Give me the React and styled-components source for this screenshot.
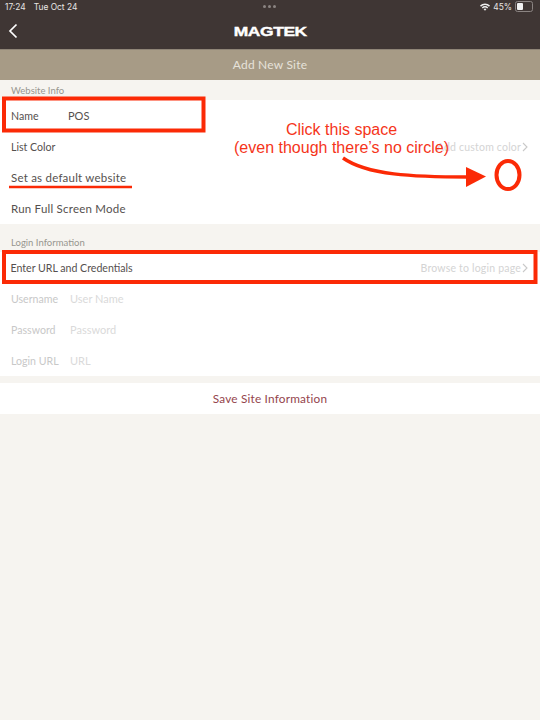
import styled, { createGlobalStyle } from "styled-components";

const GlobalStyle = createGlobalStyle`
  html, body {
    margin: 0;
    padding: 0;
    background: #f6f4f0;
  }
`;

const Screen = styled.div`
  position: relative;
  width: 540px;
  height: 720px;
  overflow: hidden;
  background: #f6f4f0;
  font-family: Lato, "Open Sans", sans-serif;
`;

const TopBar = styled.div`
  background: #3f3634;
  height: 49px;
  border-bottom: 1px solid #8f8577;
  display: flex;
  flex-direction: column;
`;

const StatusBar = styled.div`
  height: 13px;
  padding: 0 6px 0 5px;
  display: flex;
  align-items: center;
  justify-content: space-between;
  color: #e8e6e4;
  font-family: Inter, "Liberation Sans", sans-serif;
  font-size: 8.4px;
`;

const StatusLeft = styled.div`
  display: flex;
  gap: 8px;
  width: 100px;
`;

const Dots = styled.div`
  display: flex;
  gap: 2px;
`;

const Dot = styled.span`
  width: 3px;
  height: 3px;
  border-radius: 50%;
  background: #8b8482;
`;

const StatusRight = styled.div`
  display: flex;
  align-items: center;
  justify-content: flex-end;
  gap: 3px;
  width: 100px;
`;

const Battery = styled.div`
  width: 14px;
  height: 7px;
  border: 1px solid #8b8482;
  border-radius: 2.5px;
  padding: 1px;
  margin-right: 1px;
  display: flex;
`;

const BatteryLevel = styled.div`
  width: 45%;
  background: #f2f2f2;
  border-radius: 1px;
`;

const NavBar = styled.div`
  flex: 1;
  position: relative;
  display: flex;
  align-items: center;
  justify-content: center;
`;

const BackButton = styled.svg`
  position: absolute;
  left: 8px;
  top: 10px;
`;

const Logo = styled.div`
  color: #fff;
  font-family: "Liberation Sans", sans-serif;
  font-weight: 700;
  font-size: 13px;
  letter-spacing: -0.3px;
  transform: scaleX(1.34);
  -webkit-text-stroke: 0.4px #fff;
`;

const TitleBar = styled.div`
  background: #a79b86;
  height: 30px;
  padding-bottom: 2px;
  box-sizing: border-box;
  display: flex;
  align-items: center;
  justify-content: center;
  color: #e6e2da;
  font-size: 12px;
  letter-spacing: 0.2px;
`;

const SectionLabel = styled.div`
  height: ${(p) => p.$height}px;
  padding: 0 0 ${(p) => p.$bottom}px 11px;
  box-sizing: border-box;
  display: flex;
  align-items: flex-end;
  color: #96968f;
  font-size: 9.5px;
`;

const Group = styled.div`
  background: #fff;
  margin-bottom: ${(p) => p.$gap || 0}px;
`;

const Row = styled.div`
  height: 31px;
  padding: 0 12px 0 ${(p) => p.$inset || 11}px;
  display: flex;
  align-items: center;
  font-size: 10.6px;
  color: ${(p) => (p.$muted ? "#c8c8c8" : "#55504e")};
`;

const RowLabel = styled.span`
  width: ${(p) => p.$width || 59}px;
  flex: none;
`;

const RowValue = styled.span`
  font-size: 11px;
  color: ${(p) => (p.$placeholder ? "#dadada" : "#55504e")};
`;

const Wide = styled.span`
  font-size: 11.5px;
  letter-spacing: 0.22px;
`;

const Accessory = styled.div`
  margin-left: auto;
  display: flex;
  align-items: center;
  gap: 1px;
  color: #d4d4d4;
  font-size: 10.5px;
  letter-spacing: 0.2px;
`;

const SaveButton = styled.div`
  height: 31px;
  background: #fff;
  display: flex;
  align-items: center;
  justify-content: center;
  color: #94444c;
  font-size: 11.8px;
  letter-spacing: 0.2px;
`;

const Callout = styled.div`
  position: absolute;
  left: 199.500px;
  top: 121px;
  width: 284px;
  text-align: center;
  color: #f5351a;
  font-family: "Liberation Sans", sans-serif;
  font-size: 16px;
  line-height: 18px;
`;

const Markup = styled.svg`
  position: absolute;
  left: 0;
  top: 0;
  pointer-events: none;
`;

function Chevron() {
  return (
    <svg width="6" height="10" viewBox="0 0 6 10">
      <path d="M1 1l4 4-4 4" fill="none" stroke="#c9c9c9" strokeWidth="1.1" />
    </svg>
  );
}

export default function App() {
  return (
    <>
      <GlobalStyle />
      <Screen>
        <TopBar>
          <StatusBar>
            <StatusLeft>
              <span>17:24</span>
              <span>Tue Oct 24</span>
            </StatusLeft>
            <Dots>
              <Dot />
              <Dot />
              <Dot />
            </Dots>
            <StatusRight>
              <svg width="10" height="8" viewBox="0 0 10 8">
                <path d="M0 2.6a7.2 7.2 0 0 1 10 0L9 3.7a5.7 5.7 0 0 0-8 0z" fill="#eee" />
                <path d="M1.8 4.4a4.6 4.6 0 0 1 6.4 0L7.2 5.5a3.1 3.1 0 0 0-4.4 0z" fill="#eee" />
                <path d="M3.6 6.2a2 2 0 0 1 2.8 0L5 7.7z" fill="#eee" />
              </svg>
              <span>45%</span>
              <Battery>
                <BatteryLevel />
              </Battery>
            </StatusRight>
          </StatusBar>
          <NavBar>
            <BackButton width="10" height="16" viewBox="0 0 10 16">
              <path d="M8.5 1.5L2 8l6.5 6.5" fill="none" stroke="#fff" strokeWidth="1.7" />
            </BackButton>
            <Logo>MAGTEK</Logo>
          </NavBar>
        </TopBar>
        <TitleBar>Add New Site</TitleBar>

        <SectionLabel $height={20} $bottom={4}>Website Info</SectionLabel>
        <Group>
          <Row>
            <RowLabel $width={57}>Name</RowLabel>
            <RowValue>POS</RowValue>
          </Row>
          <Row>
            List Color
            <Accessory>
              Add custom color
              <Chevron />
            </Accessory>
          </Row>
          <Row>
            <Wide>Set as default website</Wide>
          </Row>
          <Row>
            <Wide>Run Full Screen Mode</Wide>
          </Row>
        </Group>

        <SectionLabel $height={28} $bottom={4}>Login Information</SectionLabel>
        <Group $gap={7}>
          <Row $inset={10.5}>
            Enter URL and Credentials
            <Accessory>
              Browse to login page
              <Chevron />
            </Accessory>
          </Row>
          <Row $muted>
            <RowLabel>Username</RowLabel>
            <RowValue $placeholder>User Name</RowValue>
          </Row>
          <Row $muted>
            <RowLabel>Password</RowLabel>
            <RowValue $placeholder>Password</RowValue>
          </Row>
          <Row $muted>
            <RowLabel>Login URL</RowLabel>
            <RowValue $placeholder>URL</RowValue>
          </Row>
        </Group>
        <SaveButton>Save Site Information</SaveButton>

        <Callout>
          Click this space
          <br />
          (even though there’s no circle)
        </Callout>
        <Markup width="540" height="720" viewBox="0 0 540 720">
          <g fill="none" stroke="#fb2a06">
            <rect x="4" y="98.500" width="199.500" height="32" strokeWidth="4" />
            <rect x="4" y="252" width="531.500" height="30" strokeWidth="4" />
            <path d="M9 187h123" strokeWidth="2.600" />
            <path d="M343 158c24 17 70 19 125 19" strokeWidth="3.400" />
            <ellipse cx="508" cy="175" rx="11.500" ry="14" strokeWidth="4" />
          </g>
          <path d="M466 167l20 9.500-20 10.500z" fill="#fb2a06" />
        </Markup>
      </Screen>
    </>
  );
}
